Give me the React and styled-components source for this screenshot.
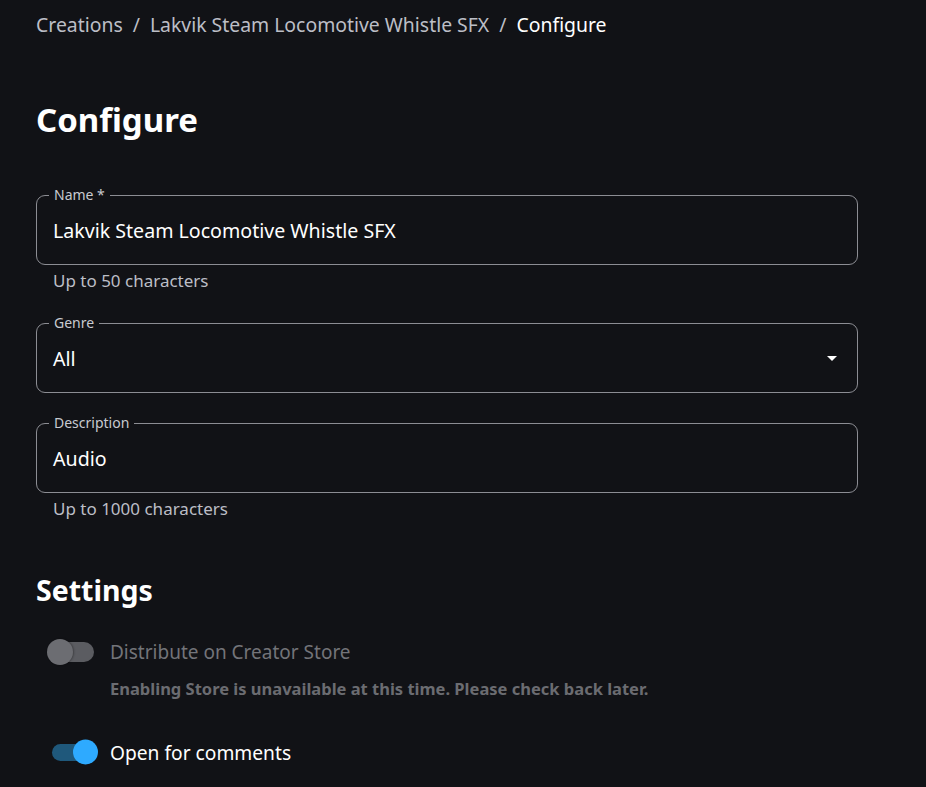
import React from 'react';
import styled, { createGlobalStyle } from 'styled-components';

const GlobalStyle = createGlobalStyle`
  html, body {
    margin: 0;
    background: #111216;
    font-family: "Noto Sans", "Liberation Sans", sans-serif;
  }
`;

const Page = styled.div`
  padding: 0 36px;
  width: 822px;
  color: #ffffff;
`;

const Breadcrumbs = styled.nav`
  display: flex;
  align-items: center;
  gap: 10px;
  height: 48px;
  font-size: 19.4px;
  color: #bcbec6;
`;

const Crumb = styled.span`
  color: ${props => props.current ? '#ffffff' : '#bcbec6'};
`;

const Title = styled.h1`
  margin: 50px 0 53px;
  font-size: 33px;
  font-weight: 700;
  line-height: 44px;
`;

const Field = styled.div`
  margin-bottom: ${props => props.gap}px;
`;

const Box = styled.fieldset`
  margin: 0;
  position: relative;
  height: 70px;
  box-sizing: border-box;
  border: 1px solid #8c8d93;
  border-radius: 9px;
  padding: 0 16px;
  display: flex;
  align-items: center;
  justify-content: space-between;
`;

const Legend = styled.legend`
  position: absolute;
  top: -11px;
  left: 12px;
  padding: 0 5px;
  background: #111216;
  font-size: 14px;
  line-height: 20px;
  color: #c8cad0;
`;

const Value = styled.span`
  font-size: 19.6px;
  color: #ffffff;
`;

const Caret = styled.span`
  width: 0;
  height: 0;
  border-left: 5px solid transparent;
  border-right: 5px solid transparent;
  border-top: 5px solid #ffffff;
  margin-right: 4px;
`;

const Helper = styled.div`
  padding: 4px 0 0 17px;
  font-size: 17px;
  line-height: 24px;
  color: #bcbec6;
`;

const SectionTitle = styled.h2`
  margin: 0 0 29px;
  font-size: 28.5px;
  font-weight: 700;
  line-height: 36px;
`;

const SettingRow = styled.div`
  display: flex;
  align-items: center;
  height: 30px;
`;

const SwitchSlot = styled.span`
  display: flex;
  align-items: center;
  width: 74px;
  flex-shrink: 0;
`;

const Track = styled.span`
  position: relative;
  display: inline-block;
  width: ${props => props.on ? 45 : 42}px;
  height: ${props => props.on ? 17 : 20}px;
  margin-left: 16px;
  border-radius: 10px;
  background: ${props => props.on ? '#1f587b' : '#5b5c61'};
`;

const Knob = styled.span`
  position: absolute;
  top: 50%;
  transform: translateY(-50%);
  left: ${props => props.on ? '21px' : '-5px'};
  width: ${props => props.on ? 25 : 26}px;
  height: ${props => props.on ? 25 : 26}px;
  border-radius: 50%;
  background: ${props => props.on ? '#2eaaff' : '#6c6d72'};
  box-shadow: ${props => props.on ? 'none' : '1px 0 2px rgba(0,0,0,0.3)'};
`;

const SettingLabel = styled.span`
  font-size: ${props => props.disabled ? 19 : 19.2}px;
  color: ${props => props.disabled ? '#737479' : '#ffffff'};
`;

const Note = styled.div`
  margin: 10px 0 37px 74px;
  font-size: 16.5px;
  font-weight: 700;
  color: #6b6c71;
`;

const Switch = ({ on }) => (
  <SwitchSlot>
    <Track on={on}><Knob on={on} /></Track>
  </SwitchSlot>
);

const App = () => (
  <Page>
    <GlobalStyle />
    <Breadcrumbs>
      <Crumb>Creations</Crumb>
      <span>/</span>
      <Crumb>Lakvik Steam Locomotive Whistle SFX</Crumb>
      <span>/</span>
      <Crumb current>Configure</Crumb>
    </Breadcrumbs>
    <Title>Configure</Title>

    <Field gap={30}>
      <Box>
        <Legend>Name *</Legend>
        <Value>Lakvik Steam Locomotive Whistle SFX</Value>
      </Box>
      <Helper>Up to 50 characters</Helper>
    </Field>

    <Field gap={30}>
      <Box>
        <Legend>Genre</Legend>
        <Value>All</Value>
        <Caret />
      </Box>
    </Field>

    <Field gap={51}>
      <Box>
        <Legend>Description</Legend>
        <Value>Audio</Value>
      </Box>
      <Helper>Up to 1000 characters</Helper>
    </Field>

    <SectionTitle>Settings</SectionTitle>
    <SettingRow>
      <Switch />
      <SettingLabel disabled>Distribute on Creator Store</SettingLabel>
    </SettingRow>
    <Note>Enabling Store is unavailable at this time. Please check back later.</Note>
    <SettingRow>
      <Switch on />
      <SettingLabel>Open for comments</SettingLabel>
    </SettingRow>
  </Page>
);

export default App;
